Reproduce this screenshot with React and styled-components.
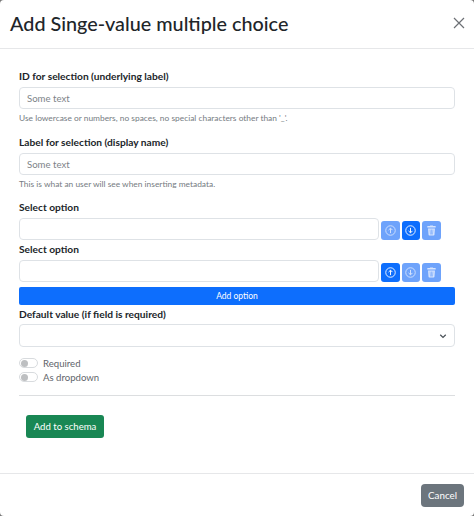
import styled, { createGlobalStyle } from 'styled-components';
import { useState } from 'react';

const GlobalStyle = createGlobalStyle`
  html, body {
    margin: 0;
    padding: 0;
    background: #777;
  }

  * {
    box-sizing: border-box;
  }
`;

const Modal = styled.div`
  width: 474px;
  height: 516px;
  display: flex;
  flex-direction: column;
  background: #fff;
  border-radius: 4px;
  color: #212529;
  font-family: 'Lato', 'Noto Sans', sans-serif;
  overflow: hidden;
`;

const Header = styled.header`
  height: 49px;
  flex: none;
  display: flex;
  align-items: center;
  justify-content: space-between;
  padding: 0 7px 2px 10px;
  border-bottom: 1px solid #e6e7e9;
`;

const Title = styled.h2`
  margin: 0;
  font-size: 19.8px;
  font-weight: 500;
  color: #212529;
`;

const CloseButton = styled.button`
  width: 16px;
  height: 16px;
  padding: 0;
  border: 0;
  background: none;
  color: #6c7075;
  display: flex;
`;

const Body = styled.main`
  flex: 1;
  padding: 18px 19px 0;
  display: flex;
  flex-direction: column;
`;

const Field = styled.div`
  margin-bottom: ${({ $gap }) => $gap ?? 0}px;
`;

const Label = styled.label`
  display: block;
  height: 18px;
  line-height: 18px;
  margin-bottom: ${({ $gap }) => $gap ?? 2}px;
  font-size: 10.2px;
  font-weight: 700;
  color: #212529;
`;

const TextInput = styled.input`
  display: block;
  width: 100%;
  height: 22px;
  padding: 0 7px;
  border: 1px solid #dee2e6;
  border-radius: 4px;
  background: #fff;
  font-family: inherit;
  font-size: 9.6px;
  color: #212529;

  &::placeholder {
    color: #7d8388;
  }
`;

const Help = styled.div`
  margin-top: 2px;
  height: 14px;
  line-height: 14px;
  font-size: 8.4px;
  color: #757b82;
`;

const OptionRow = styled.div`
  display: flex;
  align-items: flex-start;
  gap: 2px;
  padding-right: 14px;

  ${TextInput} {
    flex: 1;
    min-width: 0;
  }
`;

const OptionField = styled.div`
  width: 100%;
`;

const IconButton = styled.button`
  width: 18.7px;
  height: 19px;
  flex: none;
  margin-top: 3px;
  padding: 0;
  border: 0;
  border-radius: 3px;
  background: ${({ $disabled }) => ($disabled ? '#6ea3fb' : '#0d6efd')};
  color: ${({ $disabled }) => ($disabled ? '#d6e4fd' : '#fff')};
  display: flex;
  align-items: center;
  justify-content: center;
`;

const AddOption = styled.button`
  display: block;
  width: 100%;
  height: 18px;
  margin: 5px 0 0;
  padding: 0;
  border: 0;
  border-radius: 2px;
  background: #0d6efd;
  color: #fff;
  font-family: inherit;
  font-size: 8.5px;
`;

const SelectBox = styled.div`
  height: 23px;
  display: flex;
  align-items: center;
  justify-content: flex-end;
  padding-right: 7px;
  border: 1px solid #dee2e6;
  border-radius: 4px;
  color: #495057;
`;

const Switches = styled.div`
  margin-top: 9px;
  display: flex;
  flex-direction: column;
`;

const SwitchRow = styled.label`
  height: 14px;
  display: flex;
  align-items: center;
  gap: 5px;
  font-size: 9.6px;
  color: #5f656b;
`;

const SwitchTrack = styled.span`
  width: 19px;
  height: 10px;
  display: flex;
  align-items: center;
  padding-left: 1px;
  border: 1px solid #d8dbde;
  border-radius: 5px;
  background: #fff;

  &::before {
    content: '';
    width: 7px;
    height: 7px;
    border-radius: 50%;
    background: #bdbfc1;
  }
`;

const Divider = styled.hr`
  width: 100%;
  margin: 11px 0 0;
  border: 0;
  border-top: 1px solid #dcdee0;
`;

const SubmitButton = styled.button`
  align-self: flex-start;
  width: 78px;
  height: 23px;
  margin: 19px 0 0 7px;
  padding: 0;
  border: 0;
  border-radius: 3px;
  background: #198754;
  color: #fff;
  font-family: inherit;
  font-size: 9.6px;
`;

const Footer = styled.footer`
  height: 43px;
  flex: none;
  display: flex;
  align-items: center;
  justify-content: flex-end;
  padding: 0 10px 0 0;
  border-top: 1px solid #e6e7e9;
`;

const CancelButton = styled.button`
  width: 43px;
  height: 23px;
  padding: 0;
  border: 0;
  border-radius: 4px;
  background: #6c757d;
  color: #fff;
  font-family: inherit;
  font-size: 9.8px;
`;

const ArrowCircle = ({ down }) => (
  <svg width="11" height="11" viewBox="0 0 16 16" fill="none" stroke="currentColor">
    <circle cx="8" cy="8" r="6.9" strokeWidth="1.3" />
    <path
      d={down ? 'M8 4.2v7M5.2 8.6 8 11.4l2.8-2.8' : 'M8 11.8v-7M5.2 7.4 8 4.6l2.8 2.8'}
      strokeWidth="1.4"
    />
  </svg>
);

const Trash = () => (
  <svg width="11" height="11" viewBox="0 0 16 16" fill="currentColor">
    <path d="M2.5 1.5h3l.6-.8h3.8l.6.8h3c.4 0 .7.3.7.7v1c0 .2-.2.4-.4.4H2.2c-.2 0-.4-.2-.4-.4v-1c0-.4.3-.7.7-.7z" />
    <path d="M3 5h10l-.7 9.3c0 .6-.5 1-1.1 1H4.8c-.6 0-1.1-.4-1.1-1L3 5zm2.4 1.5.4 7.2h.9l-.4-7.2h-.9zm2.2 0v7.2h.9V6.500h-.9zm2.1 0-.4 7.2h.9l.4-7.2h-.9z" fillRule="evenodd" />
  </svg>
);

const Option = ({ upActive, downActive }) => (
  <OptionField>
    <Label>Select option</Label>
    <OptionRow>
      <TextInput type="text" />
      <IconButton $disabled={!upActive}><ArrowCircle /></IconButton>
      <IconButton $disabled={!downActive}><ArrowCircle down /></IconButton>
      <IconButton $disabled><Trash /></IconButton>
    </OptionRow>
  </OptionField>
);

function Switch({ label }) {
  return (
    <SwitchRow>
      <SwitchTrack />
      {label}
    </SwitchRow>
  );
}

export default function App() {
  const [id, setId] = useState('');
  const [name, setName] = useState('');

  return (
    <>
      <GlobalStyle />
      <Modal>
        <Header>
          <Title>Add Singe-value multiple choice</Title>
          <CloseButton aria-label="Close">
            <svg width="16" height="16" viewBox="0 0 16 16" fill="none" stroke="currentColor" strokeWidth="1.2">
              <path d="M3 3l10 10M13 3 3 13" />
            </svg>
          </CloseButton>
        </Header>
        <Body>
          <Field $gap={8}>
            <Label>ID for selection (underlying label)</Label>
            <TextInput type="text" placeholder="Some text" value={id} onChange={e => setId(e.target.value)} />
            <Help>Use lowercase or numbers, no spaces, no special characters other than '_'.</Help>
          </Field>
          <Field $gap={7}>
            <Label>Label for selection (display name)</Label>
            <TextInput type="text" placeholder="Some text" value={name} onChange={e => setName(e.target.value)} />
            <Help>This is what an user will see when inserting metadata.</Help>
          </Field>
          <Option downActive />
          <Option upActive />
          <AddOption>Add option</AddOption>
          <Field>
            <Label $gap={1}>Default value (if field is required)</Label>
            <SelectBox>
              <svg width="8" height="8" viewBox="0 0 16 16" fill="none" stroke="currentColor" strokeWidth="2.400">
                <path d="M2.500 5.500 8 11l5.500-5.500" />
              </svg>
            </SelectBox>
          </Field>
          <Switches>
            <Switch label="Required" />
            <Switch label="As dropdown" />
          </Switches>
          <Divider />
          <SubmitButton>Add to schema</SubmitButton>
        </Body>
        <Footer>
          <CancelButton>Cancel</CancelButton>
        </Footer>
      </Modal>
    </>
  );
}
